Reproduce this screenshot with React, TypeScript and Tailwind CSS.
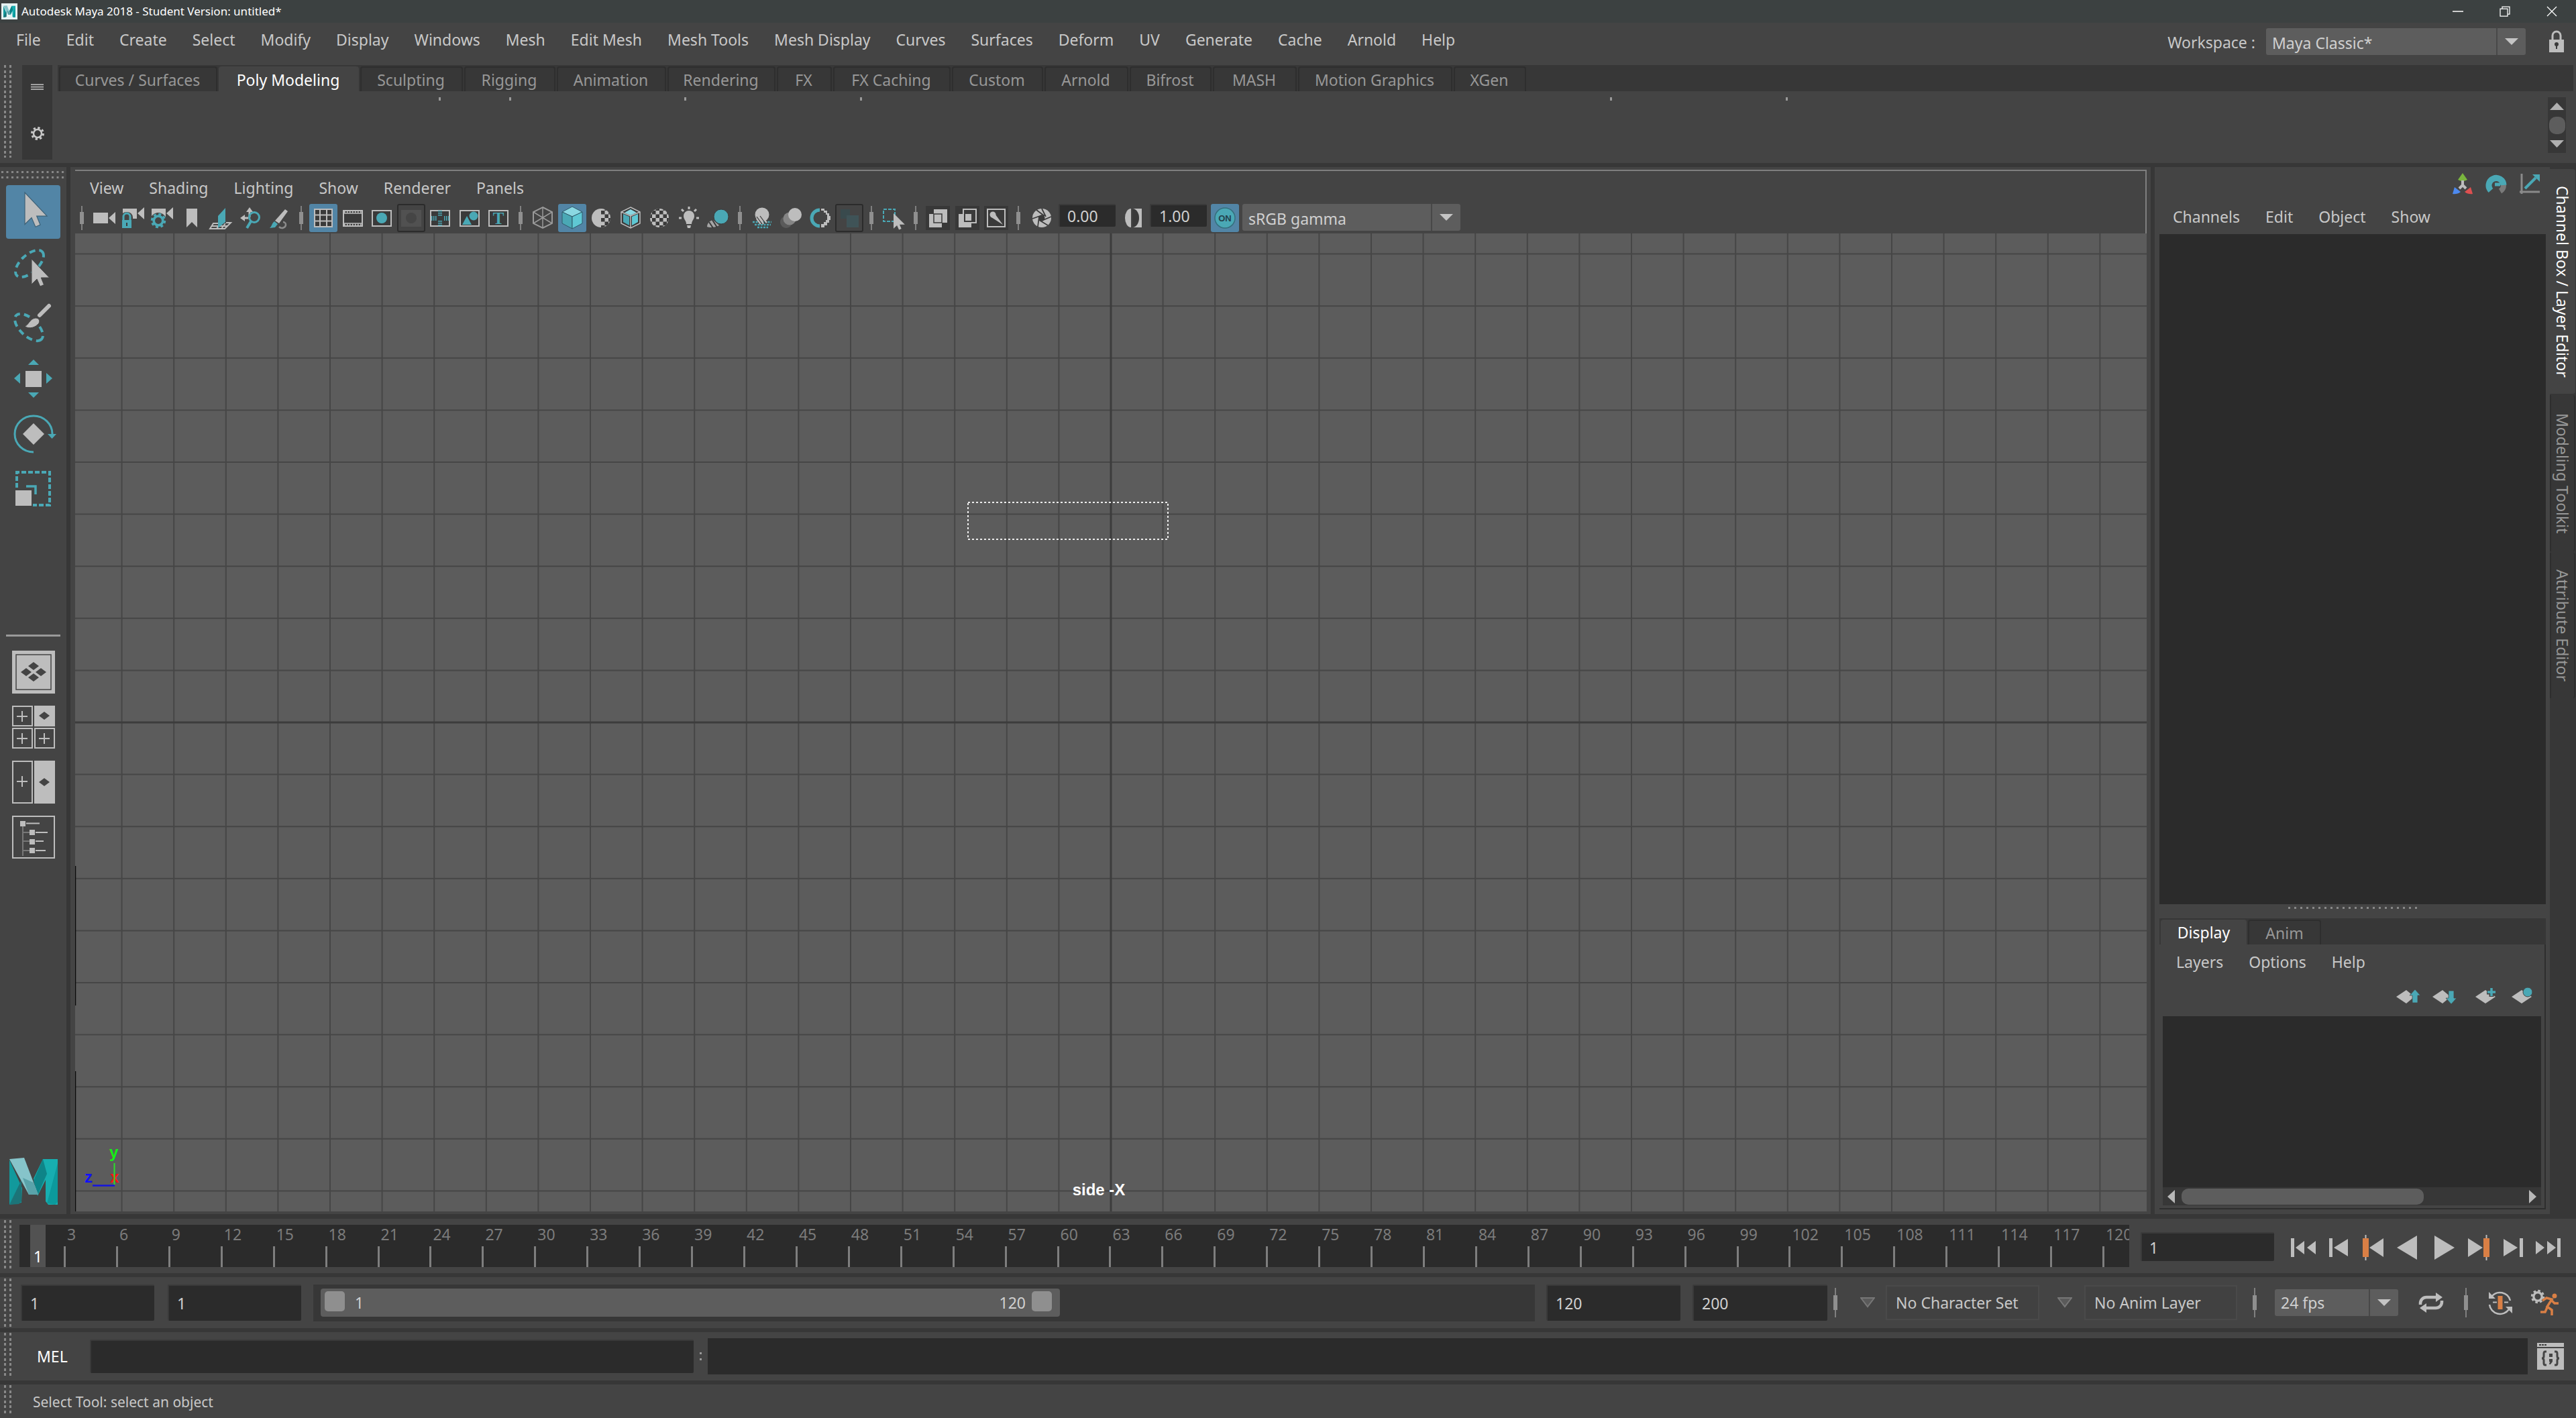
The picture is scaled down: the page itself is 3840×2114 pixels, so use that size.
import type { ReactNode } from "react";

const G = "#bdbdbd";
const T = "#4aa8b5";
const D = "#3a3a3a";

const menus = ["File", "Edit", "Create", "Select", "Modify", "Display", "Windows", "Mesh", "Edit Mesh", "Mesh Tools", "Mesh Display", "Curves", "Surfaces", "Deform", "UV", "Generate", "Cache", "Arnold", "Help"];

const shelfTabs: [string, string][] = [
  ["Curves / Surfaces", "w-[236px]"],
  ["Poly Modeling", "w-[209px]"],
  ["Sculpting", "w-[153px]"],
  ["Rigging", "w-[136px]"],
  ["Animation", "w-[163px]"],
  ["Rendering", "w-[161px]"],
  ["FX", "w-[82px]"],
  ["FX Caching", "w-[175px]"],
  ["Custom", "w-[136px]"],
  ["Arnold", "w-[125px]"],
  ["Bifrost", "w-[122px]"],
  ["MASH", "w-[125px]"],
  ["Motion Graphics", "w-[230px]"],
  ["XGen", "w-[108px]"],
];

const shelfMarks = ["w-[657px]", "w-[105px]", "w-[261px]", "w-[262px]", "w-[1118px]", "w-[262px]"];

function DotsV({ className = "" }: { className?: string }) {
  return (
    <svg className={"w-3 " + className} aria-hidden="true">
      <defs>
        <pattern id="dv" width="12" height="15" patternUnits="userSpaceOnUse">
          <path d="M0 0h3v4h-3zM8 0h3v4h-3zM0 8h3v4h-3zM8 8h3v4h-3z" fill="#888" />
        </pattern>
      </defs>
      <rect width="100%" height="100%" fill="url(#dv)" />
    </svg>
  );
}

function Sep({ className = "" }: { className?: string }) {
  return (
    <svg className={"h-9 w-2 shrink-0 " + className} viewBox="0 0 8 36" preserveAspectRatio="none" aria-hidden="true">
      <path d="M3 0h2v36h-2z" fill="#808080" />
      <path d="M1 9h6v18h-6z" fill="#8f8f8f" />
    </svg>
  );
}

function Dark({ className = "h-[6px]" }: { className?: string }) {
  return <div className={"shrink-0 bg-[#373737] " + className} />;
}

type TI = { label: string; on?: boolean; off?: boolean; art: ReactNode };

function ToolButton({ label, on, off, art }: TI) {
  return (
    <button
      aria-label={label}
      className={"h-[42px] w-[42px] shrink-0 rounded-[3px] " + (on ? "bg-[#5285a6]" : off ? "border-2 border-[#2b2b2b]" : "")}
    >
      <svg viewBox={off ? "2 2 38 38" : "0 0 42 42"} className="h-full w-full">{art}</svg>
    </button>
  );
}

const gearPath = (cx: number, cy: number, r: number) => (
  <g>
    <circle cx={cx} cy={cy} r={r * 0.62} fill="none" stroke="currentColor" strokeWidth={r * 0.34} />
    <circle cx={cx} cy={cy} r={r * 0.88} fill="none" stroke="currentColor" strokeWidth={r * 0.28} strokeDasharray={`${r * 0.36} ${r * 0.331}`} />
  </g>
);

const group1: TI[] = [
  { label: "Select camera", art: <g fill={G}><path d="M5 13h22v16h-22zM28 21l10-9v18z" /></g> },
  { label: "Lock camera", art: <g><path d="M5 7h21v15h-21zM27 14l10-9v18z" fill={G} /><path d="M3 20q0-8 8-8t9 8v17h-17z" fill="#444" /><path d="M4 24h14v12h-14z" fill={T} /><path d="M6 24v-5a5 5 0 0 1 10 0v5" fill="none" stroke={T} strokeWidth="3" /><path d="M10 28h2v5h-2z" fill={D} /></g> },
  { label: "Camera attributes", art: <g><path d="M5 7h21v15h-21zM27 14l10-9v18z" fill={G} /><circle cx="15" cy="25" r="12" fill="#444" /><g color={T}>{gearPath(15, 25, 11)}</g></g> },
  { label: "Bookmarks", art: <path d="M13 7h16v28l-8-8-8 8z" fill={G} /> },
  { label: "Image plane", art: <g><path d="M17 29h-7l-5 8h22l9-9h-7M8 33h24M15 37l5-8M22 37l6-8" fill="none" stroke={G} strokeWidth="2" /><path d="M17 18l11-12v21l-11 9z" fill={T} /></g> },
  { label: "2D pan zoom", art: <g><path d="M20 5l-5 7h3.500v8h3v-8h3.500zM6 21l7-5v3.500h5v3h-5v3.500z" fill={G} /><circle cx="27" cy="20" r="7.500" fill="none" stroke={T} strokeWidth="3" /><path d="M22 26l-6 10" stroke={T} strokeWidth="4" /></g> },
  { label: "Grease pencil", art: <g><path d="M30 8l4 3-13 18-6-4z" fill={G} /><path d="M14 26l5 4-4 5-8 1c3-2 3-7 7-10z" fill={T} /><path d="M21 34c4 4 10 1 10-3s-4-4-4-4" fill="none" stroke="#8c8c8c" strokeWidth="2.500" /></g> },
];

const frame = <rect x="7" y="10" width="28" height="23" fill={D} stroke={G} strokeWidth="2" />;

const group2: TI[] = [
  { label: "Grid", on: true, art: <g><rect x="8" y="8" width="26" height="26" fill={D} stroke={G} strokeWidth="2" /><path d="M16 9v24M26 9v24M9 16.500h24M9 25.500h24" stroke={G} strokeWidth="2" /></g> },
  { label: "Film gate", art: <g>{frame}<path d="M8 14h26M8 29h26" stroke={G} strokeWidth="1.500" /><path d="M8 12h26M8 31h26" stroke={G} strokeWidth="3" strokeDasharray="1.500 2.500" /></g> },
  { label: "Resolution gate", art: <g>{frame}<circle cx="21" cy="21" r="8" fill={T} /></g> },
  { label: "Gate mask", off: true, art: <g><rect x="6" y="9" width="30" height="25" fill="#515151" /><circle cx="21" cy="21" r="8" fill="#454545" /></g> },
  { label: "Field chart", art: <g>{frame}<path d="M21 10v8M21 25v8" stroke={T} strokeWidth="6" strokeDasharray="1.500 1.500" /><path d="M8 21.500h8M27 21.500h8" stroke={T} strokeWidth="7" strokeDasharray="1.500 1.500" /></g> },
  { label: "Safe action", art: <g>{frame}<circle cx="27" cy="18" r="6.500" fill={T} /><path d="M10 31l7-13 7 13z" fill={T} /></g> },
  { label: "Safe title", art: <g>{frame}<text x="21" y="30" textAnchor="middle" fontFamily="Liberation Serif, serif" fontWeight="bold" fontSize="25" fill={T}>T</text></g> },
];

const checks = (id: string) => (
  <defs>
    <pattern id={id} width="11" height="11" patternUnits="userSpaceOnUse" x="21" y="21">
      <path d="M0 0h5.500v5.500h-5.500zM5.500 5.500h5.500v5.500h-5.500z" fill={D} />
    </pattern>
  </defs>
);

const group3: TI[] = [
  { label: "Wireframe", art: <g fill="none" stroke="#999" strokeWidth="2"><path d="M21 5l14 7v17l-14 7-14-7v-17z" /><path d="M21 5v31M7 12l28 17M35 12l-28 17" strokeWidth="1.500" /></g> },
  { label: "Smooth shade", on: true, art: <g stroke="#2f5a6a" strokeWidth="1"><path d="M21 4l15 8-15 7-15-7z" fill="#8ad8e2" /><path d="M6 12l15 7v18l-15-8z" fill={T} /><path d="M36 12l-15 7v18l15-8z" fill="#5fc8d4" /></g> },
  { label: "Default material", art: <g>{checks("ck1")}<circle cx="21" cy="21" r="14" fill={G} /><path d="M21 7a14 14 0 0 1 0 28z" fill="url(#ck1)" /></g> },
  { label: "Wireframe on shaded", art: <g><path d="M21 5l14 7v17l-14 7-14-7v-17z" fill={D} stroke={G} strokeWidth="1.500" /><path d="M21 8l9 5-9 4-9-4z" fill="#8ad8e2" /><path d="M10 15l9 4v13l-9-5z" fill={T} /><path d="M32 15l-9 4v13l9-5z" fill="#5fc8d4" /><path d="M21 18v17M7 12l14 6 14-6" stroke={G} strokeWidth="1.500" fill="none" /></g> },
  { label: "Textured", art: <g>{checks("ck2")}<circle cx="21" cy="21" r="14" fill={G} /><circle cx="21" cy="21" r="14" fill="url(#ck2)" /></g> },
  { label: "Use all lights", art: <g><path d="M21 10a8 8 0 0 1 8 8c0 5-4 7-4 12h-8c0-5-4-7-4-12a8 8 0 0 1 8-8z" fill={G} /><path d="M18 32h6l-1 4h-4z" fill={G} /><path d="M21 4v4M10 8l3 3M32 8l-3 3M6 21h4M32 21h4" stroke={G} strokeWidth="3" /></g> },
  { label: "Shadows", art: <g><path d="M5 34c0-5 4-9 9-10l9 8c-4 3-14 4-18 2z" fill="#a5a5a5" /><path d="M8 27l6 9M13 24l7 11" stroke={D} strokeWidth="2" /><circle cx="26" cy="19" r="11" fill={T} stroke={D} strokeWidth="1" /></g> },
];

const group4: TI[] = [
  { label: "Ambient occlusion", art: <g><path d="M7 27h28M10 31h24M14 35h16" stroke={T} strokeWidth="2.500" strokeDasharray="3 1.500" /><circle cx="21" cy="16" r="10.500" fill={G} /><path d="M13 22l6 8M17 21l6 9M22 21l6 7" stroke={G} strokeWidth="2.500" /><path d="M13 19l8 11M18 18l8 11" stroke={D} strokeWidth="1.250" /></g> },
  { label: "Motion blur", art: <g><circle cx="14" cy="27" r="9" fill="#5a5a5a" /><circle cx="19" cy="22" r="9.500" fill="#858585" /><circle cx="27" cy="16" r="10" fill={G} /></g> },
  { label: "Anti-aliasing", art: <g><path d="M20 9a12 12 0 0 0 0 24" fill="none" stroke={T} strokeWidth="5" /><path d="M22 7h5v3h4v4h3v4h2v6h-2v4h-3v4h-4v3h-5v-5h4v-3h3v-3h2v-8h-2v-3h-3v-3h-4z" fill={G} /></g> },
  { label: "Depth of field", off: true, art: <g><rect x="8" y="8" width="14" height="14" fill="#394a4d" /><rect x="17" y="17" width="18" height="18" fill="#3f5357" /></g> },
];

const group5: TI[] = [
  { label: "X-ray", art: <g><rect x="3" y="3" width="36" height="36" fill="#383838" /><path d="M15 8h20v20h-20z" fill={G} /><path d="M8 15h19v20h-19z" fill={G} /><path d="M15 15h12v13h-12z" fill={G} stroke={D} strokeWidth="1.500" /></g> },
  { label: "X-ray active", art: <g><rect x="3" y="3" width="36" height="36" fill="#383838" /><path d="M8 15h19v20h-19z" fill={G} /><path d="M15 8h19v20h-19z" fill={D} stroke={G} strokeWidth="2" /><path d="M18 15h9v10h-9z" fill={G} /></g> },
  { label: "X-ray joints", art: <g><rect x="3" y="3" width="36" height="36" fill="#383838" /><rect x="8" y="8" width="26" height="26" fill={D} stroke={G} strokeWidth="2" /><circle cx="16" cy="16" r="4.500" fill={G} /><path d="M14 20l6-4 11 15z" fill={G} /></g> },
];

const cursor = "M0 0v38l8.500-8 5 11 6-2.500-4.500-10.500h13z";

const leftTools: TI[] = [
  { label: "Select tool", on: true, art: <path d={cursor} transform="translate(28 11) scale(1.180 1.250)" fill={G} stroke="#3d6177" strokeWidth="1" /> },
  { label: "Lasso tool", art: <g><ellipse cx="35" cy="34" rx="26" ry="13" transform="rotate(-43 35 34)" fill="none" stroke={T} strokeWidth="4" strokeDasharray="9 6" /><path d={cursor} transform="translate(38 27) scale(.950 1)" fill={G} stroke="#444" /></g> },
  { label: "Paint selection tool", art: <g><ellipse cx="34" cy="46" rx="26" ry="13" transform="rotate(43 34 46)" fill="none" stroke={T} strokeWidth="4" strokeDasharray="9 6" /><path d="M50 28l14-14" stroke={G} strokeWidth="6" strokeLinecap="round" /><path d="M28 44c5 0 7-11 16-12 6 0 8 6 3 10-6 6-16 6-19 2z" fill={G} stroke="#444" /></g> },
  { label: "Move tool", art: <g><path d="M29 28h24v24h-24z" fill={G} /><path d="M41 11l8 8h-16zM41 68l8-8h-16zM12 39l9-8v16zM69 39l-9-8v16z" fill={T} /></g> },
  { label: "Rotate tool", art: <g><path d="M41 66a28 27 0 1 1 28-27" fill="none" stroke={T} strokeWidth="3" /><path d="M62 39h13l-6.500 7z" fill={T} /><path d="M41 23l16 16-16 16-16-16z" fill={G} /></g> },
  { label: "Scale tool", art: <g><path d="M16 36v-23h49v49h-25" fill="none" stroke={T} strokeWidth="4" strokeDasharray="7 3" /><path d="M30 34h14v12" fill="none" stroke={T} strokeWidth="3.500" /><path d="M14 40h24v23h-24z" fill={G} /></g> },
];

const diamond = (x: number, y: number, s = 8) => <path d={`M${x - s} ${y}l${s}-${s * 0.75}l${s} ${s * 0.75}l-${s} ${s * 0.75}z`} fill="#444" />;
const plus = (x: number, y: number) => <path d={`M${x - 8} ${y}h16M${x} ${y - 8}v16`} stroke={G} strokeWidth="2" />;

const layouts: { label: string; art: ReactNode }[] = [
  { label: "Single view", art: <g><rect width="64" height="64" fill={G} /><rect x="6" y="6" width="52" height="52" fill="none" stroke="#444" strokeWidth="1.500" />{diamond(32, 23, 8)}{diamond(21, 32, 8)}{diamond(43, 32, 8)}{diamond(32, 40, 8)}</g> },
  { label: "Four view", art: <g><g fill="none" stroke={G} strokeWidth="2"><rect x="1" y="1" width="29" height="29" /><rect x="1" y="34" width="29" height="29" /><rect x="34" y="34" width="29" height="29" /></g><rect x="33" width="31" height="31" fill={G} />{plus(15, 16)}{plus(15, 49)}{plus(48, 49)}{diamond(48, 15)}</g> },
  { label: "Two view", art: <g><rect x="1" y="1" width="29" height="62" fill="none" stroke={G} strokeWidth="2" /><rect x="33" width="31" height="64" fill={G} />{plus(15, 31)}{diamond(48, 32)}</g> },
  { label: "Outliner", art: <g><rect x="1" y="1" width="62" height="62" fill="none" stroke={G} strokeWidth="2" /><path d="M16 16v44M16 25h10M16 38h10M16 52h10" stroke="#777" strokeWidth="2" /><path d="M21 11.500h20M35 25h18M35 38h12M35 52h15" stroke={G} strokeWidth="2" /><path d="M12 8h8v8h-8zM26 21h8v8h-8zM26 35h8v8h-8zM26 48h8v8h-8z" fill={G} /></g> },
];

function MLogo({ className }: { className: string }) {
  return (
    <svg viewBox="0 0 72 70" className={className} role="img" aria-label="Maya">
      <path d="M0 3l19 42-1 22-18 3z" fill="#12999c" />
      <path d="M0 70l18-37v32l-4 4z" fill="#1c7478" />
      <path d="M50 2h22v68h-14l-4-5v-32l-12 24-6-26z" fill="#17aeb0" />
      <path d="M72 8l-16 60 12 2 4-4z" fill="#0c9a9c" />
      <path d="M50 2l-14 32 6 22 14-32z" fill="#0e8488" />
      <path d="M0 2l22-2 21 55h-14z" fill="#86c4ca" />
      <path d="M20 30l9 25h14l-7-18z" fill="#5aa3aa" />
    </svg>
  );
}

function Select({ id, value, className, light }: { id: string; value: string; className: string; light?: boolean }) {
  return (
    <div className={"relative flex shrink-0 " + className}>
      <select id={id} aria-label={value} defaultValue={value} className={"h-full w-full appearance-none rounded-[3px] bg-[#5d5d5d] pl-[9px] text-[#d0d0d0] outline-none " + (light ? "pt-1" : "")}>
        <option>{value}</option>
      </select>
      <span className="pointer-events-none absolute inset-y-0 right-0 flex w-11 items-center justify-center border-l-2 border-[#484848]">
        <svg viewBox="0 0 20 10" className="h-[10px] w-5"><path d="M0 0h20l-10 10z" fill="#c4c4c4" /></svg>
      </span>
    </div>
  );
}

const fieldCls = "rounded-[2px] border-t-2 border-l-2 border-[#3a3a3a] bg-[#2b2b2b] text-[#d0d0d0] outline-none ";
const thumbCls = "w-1/2 appearance-none bg-transparent [&::-webkit-slider-thumb]:h-[30px] [&::-webkit-slider-thumb]:w-[30px] [&::-webkit-slider-thumb]:appearance-none [&::-webkit-slider-thumb]:rounded-[5px] [&::-webkit-slider-thumb]:bg-[#8f8f8f]";

function PlayIcon({ children, label }: { children: ReactNode; label: string }) {
  return (
    <button aria-label={label} className="h-10 w-[52px] shrink-0">
      <svg viewBox="-26 -20 52 40" className="h-10 w-[52px]" fill={G}>{children}</svg>
    </button>
  );
}

function Viewport() {
  const n = Array.from({ length: 20 }, (_, i) => i);
  const step = 77.6;
  return (
    <div className="relative min-h-0 flex-1 overflow-hidden bg-[#5c5c5c]">
      <svg className="absolute inset-0 h-full w-full" aria-hidden="true">
        <svg x="50%" y="50%" overflow="visible">
          {n.slice(1).map((i) => (
            <path key={i} d={`M${-i * step} -2000v4000M${i * step} -2000v4000`} stroke="#464646" strokeWidth="2" />
          ))}
          {n.slice(1, 10).map((i) => (
            <path key={i} d={`M-3000 ${-i * step}h6000M-3000 ${i * step}h6000`} stroke="#464646" strokeWidth="2" />
          ))}
          <path d="M0 -2000v4000M-3000 0h6000" stroke="#3c3c3c" strokeWidth="3" />
        </svg>
        <path d="M.5 943v208M.5 1249v209" stroke="#0a0a0a" strokeWidth="1.500" />
        <rect x="1331" y="401" width="298" height="55" fill="none" stroke="#ececec" strokeWidth="2" strokeDasharray="3 3" />
      </svg>
      <svg className="absolute bottom-0 left-0 h-[120px] w-[90px]" viewBox="0 0 90 120" fontFamily="Liberation Sans, sans-serif" fontWeight="bold" fontSize="24">
        <path d="M26 81.500h33" stroke="#1414e0" strokeWidth="2.500" />
        <text x="52" y="77" fill="#ff1414">x</text>
        <path d="M58.500 48v32" stroke="#2ae02a" strokeWidth="2" />
        <text x="51" y="40" fill="#14f014">y</text>
        <text x="14" y="77" fill="#1010ff">z</text>
      </svg>
      <p className="absolute inset-x-0 bottom-[18px] pr-9 text-center font-['Liberation_Sans',sans-serif] text-2xl leading-7 font-bold text-white">side -X</p>
    </div>
  );
}

export default function App() {
  const ticks = Array.from({ length: 39 }, (_, i) => (i + 1) * 3);
  return (
    <div className="flex h-screen min-h-[1400px] flex-col overflow-hidden bg-[#444444] font-['Noto_Sans','Open_Sans',sans-serif] text-[23px] leading-8 text-[#c8c8c8]">
      <header className="flex h-[34px] shrink-0 items-center bg-[#3c4141] pr-7 pl-[2px] text-[17px] text-white">
        <span className="flex h-6 w-6 items-center justify-center bg-[#e6f2f2]"><MLogo className="h-[18px] w-[18px]" /></span>
        <h1 className="ml-[6px] flex-1">Autodesk Maya 2018 - Student Version: untitled*</h1>
        <div className="flex gap-[54px]">
          <button aria-label="Minimize"><svg className="h-4 w-4" viewBox="0 0 16 16"><path d="M0 8h16" stroke="#fff" strokeWidth="1.500" /></svg></button>
          <button aria-label="Restore"><svg className="h-4 w-4" viewBox="0 0 16 16"><path d="M1 4h11v11h-11zM4 4v-3h11v11h-3" fill="none" stroke="#fff" strokeWidth="1.250" /></svg></button>
          <button aria-label="Close"><svg className="h-4 w-4" viewBox="0 0 16 16"><path d="M1 1l14 14M15 1l-14 14" stroke="#fff" strokeWidth="1.250" /></svg></button>
        </div>
      </header>

      <div className="flex h-[63px] shrink-0 items-center justify-between pr-[18px] pl-6">
        <nav className="flex gap-[38px] pb-[13px]">
          {menus.map((m) => <button key={m}>{m}</button>)}
        </nav>
        <div className="flex items-center pb-[7px]">
          <label htmlFor="workspace" className="mr-4 pt-[2px]">Workspace :</label>
          <Select id="workspace" value="Maya Classic*" className="h-10 w-[387px]" light />
          <button aria-label="Lock workspace" className="ml-[35px]">
            <svg className="h-[34px] w-[22px]" viewBox="0 0 22 34"><path d="M5 15v-7a6 6 0 0 1 12 0v7" fill="none" stroke={G} strokeWidth="3" /><path d="M0 14h22v19h-22z" fill={G} /><circle cx="11" cy="21" r="3" fill={D} /><path d="M10 21h2v7h-2z" fill={D} /></svg>
          </button>
        </div>
      </div>

      <div className="flex h-[146px] shrink-0">
        <DotsV className="mb-2 ml-[6px] shrink-0" />
        <div className="mb-[5px] ml-[15px] flex w-[45px] shrink-0 flex-col items-center bg-[#373737]">
          <button aria-label="Shelf menu" className="mt-7 leading-none"><svg className="h-[9px] w-[19px]" viewBox="0 0 19 9"><path d="M0 1h19M0 4.500h19M0 8h19" stroke="#b0b0b0" strokeWidth="1.750" /></svg></button>
          <button aria-label="Shelf options" className="mt-[54px] leading-none text-[#c8c8c8]"><svg className="h-[22px] w-[22px]" viewBox="0 0 22 22"><circle cx="11" cy="11" r="6" fill="none" stroke="currentColor" strokeWidth="2.500" /><circle cx="11" cy="11" r="8.500" fill="none" stroke="currentColor" strokeWidth="3" strokeDasharray="3.300 3.380" /></svg></button>
        </div>
        <div className="ml-2 flex min-w-0 flex-1 flex-col">
          <div role="tablist" className="mr-1 flex h-[39px] shrink-0 gap-[2px] bg-[#373737] pt-[2px] pl-[2px]">
            {shelfTabs.map(([t, w], i) => (
              <button key={t + i} role="tab" aria-selected={i === 1} className={"h-full shrink-0 rounded-t-[4px] pr-[2px] whitespace-nowrap " + w + (i === 1 ? " bg-[#444444] pt-[2px] text-white" : " border-x-2 border-t-2 border-[#2e2e2e] text-[#979797]")}>{t}</button>
            ))}
          </div>
          <div className="flex flex-1 justify-between pr-[15px]">
            <div className="-ml-[86px] flex h-[5px]">
              {shelfMarks.map((w, i) => (
                <span key={i} className={"mt-[9px] h-[5px] shrink-0 border-r-[3px] border-[#9a9a9a] " + w} />
              ))}
            </div>
            <div className="mt-[9px] flex h-[83px] w-[27px] flex-col items-center justify-between bg-[#373737] py-2">
              <button aria-label="Scroll up" className="leading-none"><svg className="h-[11px] w-[21px]" viewBox="0 0 21 11"><path d="M0 11h21l-10.500-11z" fill="#b0b0b0" /></svg></button>
              <div className="h-[26px] w-6 rounded-[10px] bg-[#5d5d5d]" />
              <button aria-label="Scroll down" className="leading-none"><svg className="h-[11px] w-[21px]" viewBox="0 0 21 11"><path d="M0 0h21l-10.500 11z" fill="#b0b0b0" /></svg></button>
            </div>
          </div>
        </div>
      </div>
      <Dark />

      <main className="flex min-h-0 flex-1">
        <aside className="flex w-[99px] shrink-0 flex-col">
          <svg className="mt-[6px] ml-[2px] h-[11px] w-[94px]" aria-hidden="true">
            <pattern id="dh" width="7.500" height="8" patternUnits="userSpaceOnUse"><path d="M0 0h3v3h-3z" fill="#888" /></pattern>
            <rect width="100%" height="100%" fill="url(#dh)" />
          </svg>
          <div className="mt-[10px] ml-[9px] flex w-[81px] flex-col gap-[3px]">
            {leftTools.map((t) => (
              <button key={t.label} aria-label={t.label} className={"h-20 rounded-[4px] " + (t.on ? "bg-[#5285a6]" : "")}>
                <svg viewBox="0 0 81 80" className="h-full w-full">{t.art}</svg>
              </button>
            ))}
          </div>
          <hr className="mt-[175px] ml-[9px] h-[3px] w-[81px] border-0 bg-[#9a9a9a]" />
          <div className="mt-[21px] ml-[18px] flex flex-col gap-[18px]">
            {layouts.map((l) => (
              <button key={l.label} aria-label={l.label} className="h-16 w-16"><svg viewBox="0 0 64 64" className="h-16 w-16">{l.art}</svg></button>
            ))}
          </div>
          <MLogo className="mt-auto mb-[14px] ml-[14px] h-[70px] w-[72px]" />
        </aside>
        <div className="w-[6px] shrink-0 bg-[#373737]" />

        <section className="flex min-w-0 flex-1 flex-col pt-1 pr-[6px] pb-1 pl-[7px]">
          <div className="border-t-2 border-r-2 border-[#7f7f7f]">
            <nav className="flex h-[49px] items-center gap-[38px] pl-[22px]">
              {["View", "Shading", "Lighting", "Show", "Renderer", "Panels"].map((m) => <button key={m}>{m}</button>)}
            </nav>
            <div className="flex h-11 items-start pl-[6px]">
              <Sep className="mt-[3px] mr-2" />
              <div className="flex w-[303px] justify-between">{group1.map((b) => <ToolButton key={b.label} {...b} />)}</div>
              <Sep className="mx-2 mt-[3px]" />
              <div className="flex w-[303px] justify-between">{group2.map((b) => <ToolButton key={b.label} {...b} />)}</div>
              <Sep className="mx-2 mt-[3px]" />
              <div className="flex w-[303px] justify-between">{group3.map((b) => <ToolButton key={b.label} {...b} />)}</div>
              <Sep className="mx-2 mt-[3px]" />
              <div className="flex w-[172px] justify-between">{group4.map((b) => <ToolButton key={b.label} {...b} />)}</div>
              <Sep className="mx-2 mt-[3px]" />
              <ToolButton label="Isolate select" art={<g><rect x="6" y="8" width="17" height="18" fill="none" stroke={T} strokeWidth="2" strokeDasharray="5 2" /><path d={cursor} transform="translate(21 14) scale(.600)" fill={G} /></g>} />
              <Sep className="mx-2 mt-[3px]" />
              <div className="flex w-[129px] justify-between">{group5.map((b) => <ToolButton key={b.label} {...b} />)}</div>
              <Sep className="mx-2 mt-[3px]" />
              <ToolButton label="Exposure" art={<g><circle cx="23" cy="21" r="14" fill={G} /><circle cx="23" cy="21" r="4.500" fill={D} /><path d="M23 7l6 12M37 19l-14 6M32 32l-13-8M17 34l2-15M9 22l14-5M15 9l12 9" stroke={D} strokeWidth="1.750" /></g>} />
              <input aria-label="Exposure value" defaultValue="0.00" className={fieldCls + "ml-[6px] h-[34px] w-[85px] pl-[11px]"} />
              <span className="ml-[5px] flex">
                <ToolButton label="Gamma" art={<g><path d="M20 7h14v28h-14z" fill={G} /><path d="M20 7a10 14 0 0 1 0 28z" fill={D} /><path d="M18 7a9 14 0 0 0 0 28z" fill={G} /></g>} />
              </span>
              <input aria-label="Gamma value" defaultValue="1.00" className={fieldCls + "ml-[4px] h-[34px] w-[85px] pl-[12px]"} />
              <span className="ml-[6px] flex">
                <ToolButton label="Color management on" on art={<g><circle cx="21" cy="21" r="15" fill={T} stroke="#356f7d" strokeWidth="1.500" /><text x="21" y="26" textAnchor="middle" fontFamily="Liberation Sans, sans-serif" fontWeight="bold" fontSize="13" fill="#24424c">ON</text></g>} />
              </span>
              <div className="ml-[5px]"><Select id="gamma" value="sRGB gamma" className="h-10 w-[325px]" light /></div>
            </div>
          </div>
          <Viewport />
        </section>
        <div className="w-[6px] shrink-0 bg-[#373737]" />

        <section className="flex w-[589px] shrink-0 flex-col pr-[6px] pl-[7px]">
          <div className="flex justify-end gap-[18px] pt-[9px] pr-2">
            <svg className="h-8 w-8" viewBox="0 0 32 32"><path d="M16 0l7 10q-7 4-14 0z" fill="#7ab63e" /><path d="M16 11v9M16 18l-5 5M16 18l5 5" stroke={G} strokeWidth="4" /><path d="M4 21l9 7q-5 4-12 3z" fill="#4d8af0" /><path d="M28 21l-9 7q5 4 12 3z" fill="#dd5050" /></svg>
            <svg className="h-8 w-8" viewBox="0 0 32 32"><path d="M27 18q0 6-5 9" fill="none" stroke="#7a7a7a" strokeWidth="8" /><path d="M8 26a11 11 0 1 1 19-8" fill="none" stroke={T} strokeWidth="9" /><path d="M14 17h8" stroke={T} strokeWidth="5" /></svg>
            <svg className="h-8 w-8" viewBox="0 0 32 32"><path d="M4 1v30M1 28h30" stroke="#8a8a8a" strokeWidth="3" /><path d="M9 23l16-16" stroke={T} strokeWidth="4" /><path d="M20 2h11v11z" fill={T} /></svg>
          </div>
          <nav className="mt-[17px] mb-[10px] flex gap-[38px] pl-5">
            {["Channels", "Edit", "Object", "Show"].map((m) => <button key={m}>{m}</button>)}
          </nav>
          <div className="min-h-0 flex-1 bg-[#2b2b2b]" />
          <svg className="mx-auto my-1 h-[3px] w-[193px] shrink-0" aria-hidden="true">
            <pattern id="dl" width="9" height="4" patternUnits="userSpaceOnUse"><path d="M0 0h3v3h-3z" fill="#888" /></pattern>
            <rect width="100%" height="100%" fill="url(#dl)" />
          </svg>
          <div role="tablist" className="mt-[10px] flex h-[39px] shrink-0 gap-[2px] bg-[#373737] pt-[2px] pl-[2px]">
            <button role="tab" aria-selected="true" className="w-[128px] rounded-t-[4px] bg-[#444444] text-white">Display</button>
            <button role="tab" aria-selected="false" className="w-[109px] rounded-t-[4px] border-x-2 border-t-2 border-[#2e2e2e] text-[#979797]">Anim</button>
          </div>
          <div className="mb-[7px] border-r-2 border-b-2 border-[#2e2e2e] pr-[5px] pb-1 pl-[5px]">
            <nav className="flex gap-[38px] pt-[10px] pl-5">
              {["Layers", "Options", "Help"].map((m) => <button key={m}>{m}</button>)}
            </nav>
            <div className="mt-5 flex h-[30px] justify-end gap-[18px] pr-[10px]">
              <svg className="h-[30px] w-9" viewBox="0 0 36 30"><path d="M0 16l15-10 12 10-12 10z" fill={G} /><path d="M28 5l8 9h-4v11h-8v-11h-4z" fill={T} stroke="#444" strokeWidth=".75" /></svg>
              <svg className="h-[30px] w-9" viewBox="0 0 36 30"><path d="M0 16l15-10 12 10-12 10z" fill={G} /><path d="M28 27l8-9h-4v-11h-8v11h-4z" fill={T} stroke="#444" strokeWidth=".75" /></svg>
              <svg className="ml-2 h-[30px] w-9" viewBox="0 0 36 30"><path d="M2 16l15-10 15 10-15 10z" fill={G} /><path d="M26 2v14M19 9h14" stroke="#444" strokeWidth="7" /><path d="M26 3v12M20 9h12" stroke={T} strokeWidth="3.500" /></svg>
              <svg className="h-[30px] w-9" viewBox="0 0 36 30"><path d="M2 16l15-10 15 10-15 10z" fill={G} /><circle cx="26" cy="9" r="7" fill={T} stroke="#444" /></svg>
            </div>
            <div className="mt-[15px] h-[255px] bg-[#2b2b2b]" />
            <div className="flex h-[27px] items-center bg-[#373737] px-[7px]">
              <button aria-label="Scroll left" className="leading-none"><svg className="h-5 w-[11px]" viewBox="0 0 11 20"><path d="M11 0v20l-11-10z" fill="#b8b8b8" /></svg></button>
              <div className="mr-[157px] ml-[10px] h-6 flex-1 rounded-[10px] bg-[#5d5d5d]" />
              <button aria-label="Scroll right" className="leading-none"><svg className="h-5 w-[11px]" viewBox="0 0 11 20"><path d="M0 0v20l11-10z" fill="#b8b8b8" /></svg></button>
            </div>
          </div>
        </section>

        <div role="tablist" aria-orientation="vertical" className="flex w-[39px] shrink-0 flex-col gap-[2px] bg-[#373737] pt-[3px] pr-[1px]">
          <button role="tab" aria-selected="true" className="h-[335px] rounded-r-[4px] bg-[#444444] text-white [writing-mode:vertical-rl]">Channel Box / Layer Editor</button>
          <button role="tab" aria-selected="false" className="h-[233px] rounded-r-[4px] border-y-2 border-r-2 border-[#2e2e2e] text-[#979797] [writing-mode:vertical-rl]">Modeling Toolkit</button>
          <button role="tab" aria-selected="false" className="h-[217px] rounded-r-[4px] border-y-2 border-r-2 border-[#2e2e2e] text-[#979797] [writing-mode:vertical-rl]">Attribute Editor</button>
        </div>
      </main>

      <Dark className="h-[7px]" />
      <div className="flex h-[81px] shrink-0 items-center pr-4">
        <DotsV className="mt-[2px] ml-[6px] h-[72px] shrink-0 self-start" />
        <div className="relative ml-[11px] flex h-[63px] min-w-0 flex-1 overflow-hidden bg-[#2b2b2b] leading-7 text-[#7b7b7b]">
          <div className="w-[66px] shrink-0" />
          {ticks.map((t) => (
            <div key={t} className="relative flex min-w-0 flex-1 items-end">
              <span className="h-[31px] w-[3px] bg-[#7e7e7e]" />
              <span className="absolute top-0 left-[5px]">{t}</span>
            </div>
          ))}
          <div className="relative flex w-10 shrink-0 items-end">
            <span className="h-[31px] w-[3px] bg-[#7e7e7e]" />
            <span className="absolute top-0 left-[5px]">120</span>
          </div>
          <div className="absolute inset-y-0 left-4 flex w-[23px] items-end justify-center bg-[#525252] pb-[2px] text-white">1</div>
        </div>
        <input aria-label="Current frame" defaultValue="1" className={fieldCls + "mt-[2px] ml-[17px] h-[43px] w-[199px] pl-[11px]"} />
        <div className="mt-1 ml-[18px] flex">
          <PlayIcon label="Go to start"><path d="M-19-14h5v28h-5zM-12 0l13-10v20zM5 0l13-10v20z" /></PlayIcon>
          <PlayIcon label="Step back one frame"><path d="M-14-14h5v28h-5zM-7 0l21-13v26z" /></PlayIcon>
          <PlayIcon label="Step back one key"><path d="M-12.500-19h2v38h-2z" /><path d="M-16-14h9v28h-9z" fill="#d97f45" /><path d="M-6 0l21-14v28z" /></PlayIcon>
          <PlayIcon label="Play backwards"><path d="M-17 0l30-18v36z" /></PlayIcon>
          <PlayIcon label="Play forwards"><path d="M17 0l-30-18v36z" /></PlayIcon>
          <PlayIcon label="Step forward one key"><path d="M11.500-19h2v38h-2z" /><path d="M8-14h9v28h-9z" fill="#d97f45" /><path d="M7 0l-22-14v28z" /></PlayIcon>
          <PlayIcon label="Step forward one frame"><path d="M10-14h5v28h-5zM7 0l-21-13v26z" /></PlayIcon>
          <PlayIcon label="Go to end"><path d="M14-14h5v28h-5zM12 0l-13-10v20zM-5 0l-13-10v20z" /></PlayIcon>
        </div>
      </div>

      <Dark />
      <div className="flex h-[76px] shrink-0 items-center pr-[26px]">
        <DotsV className="mt-[2px] ml-[6px] h-[72px] shrink-0 self-start" />
        <input aria-label="Animation start" defaultValue="1" className={fieldCls + "ml-[13px] h-[54px] w-[199px] shrink-0 pl-3"} />
        <input aria-label="Range start" defaultValue="1" className={fieldCls + "ml-5 h-[54px] w-[199px] shrink-0 pl-3"} />
        <div className="ml-[18px] flex h-[55px] min-w-0 flex-1 items-center bg-[#373737] pl-[11px]">
          <div className="relative flex h-[42px] flex-[1090] rounded-[4px] bg-[#5d5d5d] pr-3 pb-1 pl-[6px] text-[#d0d0d0]">
            <input type="range" aria-label="Playback start" defaultValue={0} className={thumbCls} />
            <input type="range" aria-label="Playback end" defaultValue={100} className={thumbCls} />
            <span className="pointer-events-none absolute inset-0 flex items-center justify-between pr-[51px] pl-[51px]"><span>1</span><span>120</span></span>
          </div>
          <div className="flex-[712]" />
        </div>
        <input aria-label="Range end" defaultValue="120" className={fieldCls + "ml-[17px] h-[54px] w-[200px] shrink-0 pl-3"} />
        <input aria-label="Animation end" defaultValue="200" className={fieldCls + "ml-[18px] h-[54px] w-[201px] shrink-0 pl-3"} />
        <Sep className="ml-2 h-[44px]" />
        <svg className="ml-[33px] h-4 w-[22px] shrink-0" viewBox="0 0 22 16"><path d="M1 1h20l-10 13z" fill="#5a5a5a" stroke="#777" strokeWidth="2" /></svg>
        <button className="ml-4 h-[52px] w-[229px] shrink-0 border-2 border-[#4a4a4a] bg-[#414141] pl-[13px] text-left whitespace-nowrap">No Character Set</button>
        <svg className="ml-[27px] h-4 w-[22px] shrink-0" viewBox="0 0 22 16"><path d="M1 1h20l-10 13z" fill="#5a5a5a" stroke="#777" strokeWidth="2" /></svg>
        <button className="ml-[18px] h-[52px] w-[228px] shrink-0 border-2 border-[#4a4a4a] bg-[#414141] pl-[13px] text-left whitespace-nowrap">No Anim Layer</button>
        <Sep className="ml-[22px] h-[44px]" />
        <Select id="fps" value="24 fps" className="ml-[26px] h-10 w-[184px]" />
        <button aria-label="Loop" className="ml-[30px] shrink-0">
          <svg className="h-[30px] w-[38px]" viewBox="0 0 38 30" fill="none" stroke={G} strokeWidth="4.500"><path d="M3 18v-2a9 9 0 0 1 9-9h15M35 12v2a9 9 0 0 1-9 9h-15" /><path d="M26 0l10 7-10 7zM12 16l-10 7 10 7z" fill={G} stroke="none" /></svg>
        </button>
        <Sep className="ml-[29px] h-[44px]" />
        <button aria-label="Auto keyframe" className="ml-7 shrink-0">
          <svg className="h-[38px] w-[38px]" viewBox="0 0 38 38" fill="none"><path d="M6 10a16 16 0 0 1 28 6M32 29a16 16 0 0 1-29-7" stroke={G} strokeWidth="2.500" /><path d="M2 3v10h10zM37 35v-10h-10z" fill={G} /><path d="M8 18.500h6M25 18.500h6" stroke={G} strokeWidth="2" /><path d="M15.500 9h7v20h-7z" fill="#d97f45" /></svg>
        </button>
        <button aria-label="Animation preferences" className="ml-[26px] shrink-0 text-[#bdbdbd]">
          <svg className="h-10 w-[42px]" viewBox="0 0 42 40" fill="none">{gearPath(11, 11, 10)}<circle cx="36" cy="10" r="3.500" fill="#d97f45" /><path d="M18 17l6-4 8 2-7 11 7 5v8M25 27l-3 7h-7M32 17l4 4h6" stroke="#d97f45" strokeWidth="3.500" /></svg>
        </button>
      </div>

      <Dark />
      <div className="flex h-[72px] shrink-0 items-center pr-[18px]">
        <DotsV className="mt-[1px] ml-[6px] h-[64px] shrink-0 self-start" />
        <label htmlFor="mel" className="ml-[37px] w-[79px] pb-[1px] text-white">MEL</label>
        <input id="mel" className={fieldCls + "h-[50px] w-[900px]"} />
        <svg className="mx-[9px] h-3 w-[3px] shrink-0" viewBox="0 0 3 12"><path d="M0 0h3v3h-3zM0 9h3v3h-3z" fill="#999" /></svg>
        <div className="h-[54px] flex-1 bg-[#2b2b2b]" />
        <button aria-label="Script editor" className="ml-[14px] shrink-0">
          <svg className="h-10 w-10" viewBox="0 0 40 40"><path d="M0 0h40v6h-40zM0 8h40v32h-40z" fill={G} /><path d="M3 2h3v2h-3zM7 2h3v2h-3zM11 2h3v2h-3z" fill={D} /><g fill="none" stroke="#444" strokeWidth="3"><path d="M14 13h-2q-2 0-2 3v4q0 3-3 3q3 0 3 3v4q0 3 2 3h2M26 13h2q2 0 2 3v4q0 3 3 3q-3 0-3 3v4q0 3-2 3h-2" /></g><path d="M18 16h5v5h-5zM18 24h5v4l-3 4h-2l1-4h-1z" fill="#444" /></svg>
        </button>
      </div>

      <Dark />
      <footer className="flex h-[50px] shrink-0 items-center">
        <DotsV className="mt-[1px] ml-[6px] h-[42px] shrink-0 self-start" />
        <p className="ml-[31px] pt-[2px] text-[21px]">Select Tool: select an object</p>
      </footer>
    </div>
  );
}
